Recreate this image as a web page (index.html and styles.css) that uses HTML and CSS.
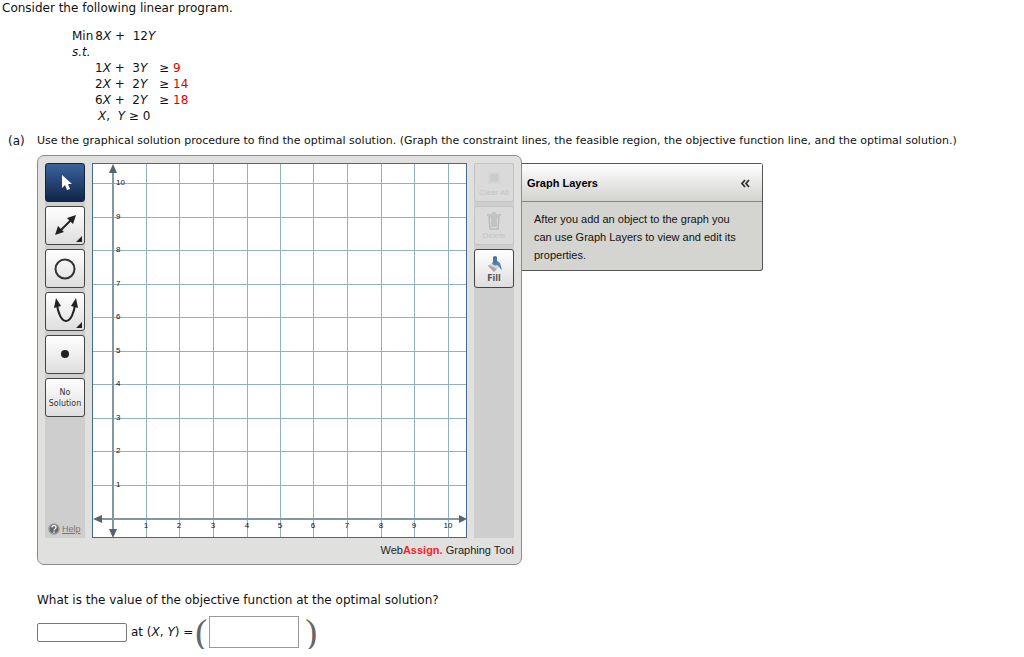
FILE: index.html
```html
<!DOCTYPE html>
<html lang="en">
<head>
  <meta charset="UTF-8">
  <meta name="viewport" content="width=device-width, initial-scale=1.0">
  <title>Linear Program</title>
  <link rel="stylesheet" href="styles.css">
</head>
<body>
  <p class="intro">Consider the following linear program.</p>

  <!-- Linear program -->
  <div class="program">
    <p>Min<span class="objective">8<i>X</i> + &nbsp;12<i>Y</i></span></p>
    <p><i>s.t.</i></p>
    <table class="constraints">
      <tr><td>1<i>X</i> + &nbsp;3<i>Y</i></td><td>≥</td><td class="value">9</td></tr>
      <tr><td>2<i>X</i> + &nbsp;2<i>Y</i></td><td>≥</td><td class="value">14</td></tr>
      <tr><td>6<i>X</i> + &nbsp;2<i>Y</i></td><td>≥</td><td class="value">18</td></tr>
    </table>
    <p class="nonneg"><i>X</i>, &nbsp;<i>Y</i> ≥ 0</p>
  </div>

  <!-- Part (a) -->
  <div class="part">
    <span class="part-label">(a)</span>
    <div class="part-body">
      <p class="task">Use the graphical solution procedure to find the optimal solution. (Graph the constraint lines, the feasible region, the objective function line, and the optimal solution.)</p>

      <div class="tool-row">
        <div class="graph-tool">
          <div class="workspace">
            <div class="toolbar">
              <button class="tool active" aria-label="Select">
                <svg width="37" height="37" viewBox="0 0 37 37"><path d="M15 11v13l3-3 2 5 3-1-2-5h4z" fill="#fff"/></svg>
              </button>
              <button class="tool" aria-label="Line">
                <svg width="37" height="37" viewBox="0 0 37 37"><path d="M12 25L26 11" stroke="#222" stroke-width="2"/><path d="M29 8l-3 9-6-6zM8 28l3-9 6 6zM35 29v6h-6z" fill="#222"/></svg>
              </button>
              <button class="tool" aria-label="Circle">
                <svg width="37" height="37" viewBox="0 0 37 37"><circle cx="18" cy="19" r="9.5" fill="none" stroke="#333" stroke-width="2"/></svg>
              </button>
              <button class="tool" aria-label="Parabola">
                <svg width="37" height="37" viewBox="0 0 37 37"><path d="M10 12c1 7 4 16 9 16s8-9 9-16" fill="none" stroke="#222" stroke-width="2"/><path d="M9 5l5 8-7 2zM29 5l2 10-7-2zM35 29v6h-6z" fill="#222"/></svg>
              </button>
              <button class="tool" aria-label="Point">
                <svg width="37" height="37" viewBox="0 0 37 37"><circle cx="18" cy="18" r="4" fill="#222"/></svg>
              </button>
              <button class="tool no-solution">No Solution</button>
              <a class="help" href="#">
                <svg width="12" height="12" viewBox="0 0 12 12"><circle cx="6" cy="6" r="5" fill="#666" stroke="#999" stroke-width="1.5"/><path d="M4 4.5c0-2.5 4-2.5 4 0C8 6 6 6 6 7.5M6 8.5V10" fill="none" stroke="#fff" stroke-width="1.3"/></svg>
                <span>Help</span>
              </a>
            </div>

            <svg class="graph" viewBox="0 0 375 375" role="img" aria-label="Coordinate plane">
              <rect x="0.5" y="0.5" width="374" height="374" fill="#fff" stroke="#456a8c"/>
              <!-- Grid lines -->
              <path class="grid" d="M54.5 1v373M87.5 1v373M121.5 1v373M155.5 1v373M188.5 1v373M221.5 1v373M255.5 1v373M289.5 1v373M322.5 1v373M356.5 1v373"/>
              <path class="grid" d="M1 20.5h373M1 54.5h373M1 87.5h373M1 121.5h373M1 154.5h373M1 188.5h373M1 221.5h373M1 255.5h373M1 288.5h373M1 322.5h373"/>
              <!-- Axes -->
              <path class="axis" d="M21 4v367M4 356h367"/>
              <path class="arrow" d="M21 1l4 9h-8zM21 375l4-9h-8zM1 356l9-4v8zM375 356l-8-4v8z"/>
              <g class="numbers">
                <text x="24" y="22">10</text>
                <text x="24" y="56">9</text>
                <text x="24" y="89">8</text>
                <text x="24" y="123">7</text>
                <text x="24" y="156">6</text>
                <text x="24" y="190">5</text>
                <text x="24" y="223">4</text>
                <text x="24" y="257">3</text>
                <text x="24" y="290">2</text>
                <text x="24" y="324">1</text>
              </g>
              <g class="numbers across">
                <text x="54" y="365">1</text>
                <text x="87" y="365">2</text>
                <text x="121" y="365">3</text>
                <text x="155" y="365">4</text>
                <text x="188" y="365">5</text>
                <text x="221" y="365">6</text>
                <text x="255" y="365">7</text>
                <text x="289" y="365">8</text>
                <text x="322" y="365">9</text>
                <text x="356" y="365">10</text>
              </g>
            </svg>

            <div class="toolbar">
              <button class="tool" disabled>
                <svg width="20" height="20" viewBox="0 0 20 20"><path d="M4 4h12v12H4z" fill="#ccc"/><path d="M6 6h8v8H6z" fill="#aaa"/></svg>
                <span>Clear All</span>
              </button>
              <button class="tool" disabled>
                <svg width="20" height="20" viewBox="0 0 20 20"><path d="M3 4h14M8 2h4M5 6l1 12h8l1-12zM8 7v9M10 7v9M12 7v9" fill="none" stroke="#777" stroke-width="1.5"/></svg>
                <span>Delete</span>
              </button>
              <button class="tool">
                <svg width="20" height="20" viewBox="0 0 20 20"><path d="M4 12l6-5 6 5-6 6z" fill="#d8d8d8"/><path d="M4 12l6 6 3-3-8-4z" fill="#aaa"/><path d="M8 9l4-3 4 3 2 7c-2-1-3-4-5-5-2 1-4 0-5-2z" fill="#5b82ad"/><path d="M9 3q2-2 4 0v6q-2 1-4 0z" fill="#4b77a8"/></svg>
                <span>Fill</span>
              </button>
            </div>
          </div>
          <p class="brand">Web<b>Assign.</b> Graphing Tool</p>
        </div>

        <!-- Graph layers panel -->
        <div class="layers">
          <div class="layers-header">
            <h2>Graph Layers</h2>
            <button class="collapse" aria-label="Collapse">
              <svg width="10" height="10" viewBox="0 0 10 10"><path d="M5 2L2 5.5l3 3.5M9 2L6 5.5l3 3.5" fill="none" stroke="#333" stroke-width="1.8"/></svg>
            </button>
          </div>
          <p class="layers-text">After you add an object to the graph you can use Graph Layers to view and edit its properties.</p>
        </div>
      </div>

      <p>What is the value of the objective function at the optimal solution?</p>
      <div class="answer">
        <input class="value-input" type="text" aria-label="Objective function value">
        <label for="point">at (<i>X</i>, <i>Y</i>) =</label>
        <span class="paren">(</span>
        <input class="point-input" id="point" type="text">
        <span class="paren close">)</span>
      </div>
    </div>
  </div>
</body>
</html>
```
FILE: styles.css
```css
/* General */
body {
  font-family: "DejaVu Sans", Verdana, sans-serif;
  font-size: 12px;
  line-height: 16px;
  margin: 0;
  padding: 0 2px;
  background-color: #fff;
  color: #111;
}

p {
  margin: 0;
}

/* Linear program */
.program {
  margin: 12px 0 9px 70px;
}

.objective {
  margin-left: 2px;
}

.constraints {
  margin-left: 23px;
  border-collapse: collapse;
}

.constraints td {
  padding: 0;
}

.constraints td:first-child {
  width: 64px;
  white-space: nowrap;
}

.constraints .value {
  padding-left: 4px;
  color: #e00000;
}

.nonneg {
  margin-left: 26px;
}

/* Part (a) */
.part {
  display: flex;
}

.part-label {
  flex: 0 0 29px;
  padding-left: 6px;
}

.part-body {
  flex: 1;
  min-width: 0;
}

.task {
  font-size: 11px;
}

.tool-row {
  display: flex;
  align-items: flex-start;
  margin: 6px 0 27px;
}

/* Graphing tool */
.graph-tool {
  padding: 7px;
  background-color: #e0e0df;
  border: 1px solid #8c8c8c;
  border-radius: 7px;
}

.workspace {
  display: flex;
  gap: 7px;
}

.toolbar {
  display: flex;
  flex-direction: column;
  gap: 4px;
  width: 40px;
  background-color: #cecece;
}

.tool {
  display: flex;
  flex-direction: column;
  align-items: center;
  justify-content: center;
  box-sizing: border-box;
  width: 100%;
  height: 39px;
  padding: 0;
  font: bold 8px/10px "DejaVu Sans", Verdana, sans-serif;
  color: #555;
  background: linear-gradient(#fff, #dedede);
  border: 1px solid #444;
  border-radius: 3px;
}

.tool.active {
  background: linear-gradient(#3c639c, #102548);
  border-color: #14233c;
}

.tool:disabled {
  font: 8px/10px "Liberation Sans", Arial, sans-serif;
  color: #c4c4c4;
  background: #dadada;
  border-color: #c4c4c4;
}

.tool:disabled svg {
  opacity: 0.3;
}

.no-solution {
  font: 8px/11px "DejaVu Sans", Verdana, sans-serif;
  color: #333;
}

.help {
  display: flex;
  align-items: center;
  gap: 2px;
  margin: auto 0 3px 3px;
  font: 9px/12px "Liberation Sans", Arial, sans-serif;
  color: #777;
}

.graph {
  width: 375px;
  height: 375px;
}

.grid {
  fill: none;
  stroke: #8fb3c2;
}

.axis {
  fill: none;
  stroke: #8396a3;
  stroke-width: 2;
}

.arrow {
  fill: #59636b;
}

.numbers {
  font: 8px "Liberation Sans", Arial, sans-serif;
  fill: #111;
}

.across {
  text-anchor: middle;
}

.brand {
  margin-top: 5px;
  font: 11px/14px "Liberation Sans", Arial, sans-serif;
  text-align: right;
  color: #222;
}

.brand b {
  color: #f22;
}

/* Graph layers */
.layers {
  flex: 0 1 240px;
  margin-top: 8px;
  font-family: "Liberation Sans", Arial, sans-serif;
  background-color: #d4d5d0;
  border: 1px solid #555;
  border-left: none;
  border-radius: 0 3px 3px 0;
}

.layers-header {
  display: flex;
  align-items: center;
  justify-content: space-between;
  height: 37px;
  padding: 0 12px 0 5px;
  background: linear-gradient(#fff, #d2d3cf);
  border-bottom: 1px solid #888;
}

.layers-header h2 {
  margin: 0;
  font-size: 11px;
  color: #000;
}

.collapse {
  display: flex;
  padding: 0;
  background: none;
  border: none;
}

.layers-text {
  padding: 8px 12px 6px;
  font-size: 11px;
  line-height: 18px;
}

/* Answer */
.answer {
  display: flex;
  align-items: center;
  height: 34px;
  margin-top: 7px;
}

.answer input {
  box-sizing: border-box;
  width: 90px;
  padding: 0 4px;
  background-color: #fff;
  border: 1px solid #777;
}

.value-input {
  height: 19px;
  margin-right: 4px;
  border-radius: 2px;
}

.answer .point-input {
  height: 32px;
  border-color: #999;
}

.paren {
  margin: 0 2px;
  font: 36px/34px "Liberation Serif", "Times New Roman", serif;
  color: #666;
}

.close {
  margin-left: 6px;
}
```
